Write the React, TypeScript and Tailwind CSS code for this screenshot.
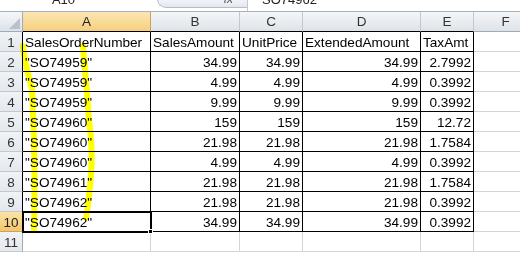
import React from 'react';

const cols = ['A', 'B', 'C', 'D', 'E', 'F'];

const rows: string[][] = [
  ['SalesOrderNumber', 'SalesAmount', 'UnitPrice', 'ExtendedAmount', 'TaxAmt'],
  ['"SO74959"', '34.99', '34.99', '34.99', '2.7992'],
  ['"SO74959"', '4.99', '4.99', '4.99', '0.3992'],
  ['"SO74959"', '9.99', '9.99', '9.99', '0.3992'],
  ['"SO74960"', '159', '159', '159', '12.72'],
  ['"SO74960"', '21.98', '21.98', '21.98', '1.7584'],
  ['"SO74960"', '4.99', '4.99', '4.99', '0.3992'],
  ['"SO74961"', '21.98', '21.98', '21.98', '1.7584'],
  ['"SO74962"', '21.98', '21.98', '21.98', '0.3992'],
  ['"SO74962"', '34.99', '34.99', '34.99', '0.3992'],
  [],
];

const font = { fontFamily: '"Liberation Sans", Arial, sans-serif' };

function Cell({ r, c, value }: { r: number; c: number; value?: string }) {
  const inTable = r < 10 && c < 5;
  const selected = r === 9 && c === 0;
  const numeric = r > 0 && c > 0;
  return (
    <div
      className={
        'relative h-5 border-r border-b px-[2px] text-[13.6px] leading-[21px] text-black whitespace-nowrap ' +
        (inTable ? 'border-black ' : 'border-[#d4d4d4] ') +
        (numeric ? 'text-right ' : 'text-left ') +
        (selected ? 'outline-2 outline-black -outline-offset-1 z-10' : '')
      }
    >
      {value}
      {selected && (
        <span className="absolute -right-[3px] -bottom-[3px] w-[5px] h-[5px] bg-black border border-white" />
      )}
    </div>
  );
}

export default function App() {
  return (
    <div className="relative w-[520px] h-[253px] overflow-hidden bg-white" style={font}>
      {/* formula bar remnant */}
      <div className="h-3 flex items-start border-b border-[#a9b3c0] bg-white overflow-hidden">
        <div className="w-[157px] flex justify-center pr-[30px] -mt-[10px] text-[13px] text-[#222]">A10</div>
        <div className="w-[90px] h-[9px] rounded-bl-[12px] border-l border-b border-[#b7bec9] bg-gradient-to-b from-[#f4f6f9] to-[#e3e7ee] flex justify-end pr-[14px] -mt-px">
          <span className="-mt-[9px] text-[12px] italic text-[#555]">fx</span>
        </div>
        <div className="w-px h-3 bg-[#c2c8d1]" />
        <div className="pl-[14px] -mt-[10px] text-[13px] text-[#222]">SO74962</div>
      </div>

      <div className="grid grid-cols-[23px_128px_89px_63px_118px_53px_64px]">
        {/* header row */}
        <div className="relative h-5 border-r border-b border-[#9eabbb] bg-gradient-to-b from-[#f6f7f9] to-[#dde2e8]">
          <svg className="absolute right-[2px] bottom-[2px]" width="11" height="11">
            <polygon points="11,0 11,11 0,11" fill="#b9c2cc" />
          </svg>
        </div>
        {cols.map((c, i) => (
          <div
            key={c}
            className={
              'h-5 border-r text-center text-[13.5px] leading-5 ' +
              (i === 0
                ? 'bg-gradient-to-b from-[#fbe6b4] to-[#f6cf7c] border-[#c7a35c] text-[#222] '
                : 'bg-gradient-to-b from-[#f4f6f8] to-[#dfe3e8] border-[#c3c9d1] text-[#333] ') +
              (i < 5 ? 'border-b border-b-black' : 'border-b border-b-[#9eabbb]')
            }
          >
            {c}
          </div>
        ))}

        {rows.map((row, r) => (
          <React.Fragment key={r}>
            <div
              className={
                'h-5 border-b text-center text-[13.5px] leading-[21px] ' +
                (r === 9
                  ? 'bg-gradient-to-b from-[#fbe3a8] to-[#f3c66a] border-[#c7a35c] text-[#222] '
                  : 'bg-gradient-to-b from-[#f1f3f6] to-[#e4e8ed] border-[#c3c9d1] text-[#333] ') +
                (r < 10 ? 'border-r border-r-black' : 'border-r border-r-[#9eabbb]')
              }
            >
              {r + 1}
            </div>
            {[0, 1, 2, 3, 4, 5].map((c) => (
              <Cell key={c} r={r} c={c} value={row[c]} />
            ))}
          </React.Fragment>
        ))}
      </div>

      {/* highlighter marks */}
      <svg
        className="absolute left-0 top-0 pointer-events-none mix-blend-multiply"
        width="520"
        height="253"
      >
        <path
          d="M23,46 Q26,70 32,88 L34,140 Q35,190 34,229"
          fill="none"
          stroke="#ffff00"
          strokeWidth="6"
          strokeLinecap="round"
        />
        <path
          d="M83,46 Q86,80 89,120 Q93,150 91,175 Q89,200 86,218"
          fill="none"
          stroke="#ffff00"
          strokeWidth="6"
          strokeLinecap="round"
        />
      </svg>
    </div>
  );
}
